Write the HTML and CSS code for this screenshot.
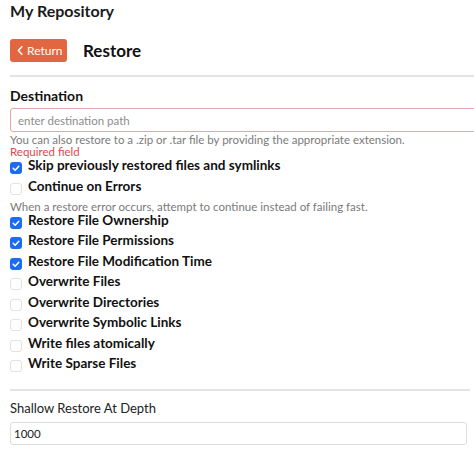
FILE: index.html
```html
<!DOCTYPE html>
<html>
<head>
<meta charset="utf-8">
<link rel="stylesheet" href="styles.css">
</head>
<body>
<div class="page">
  <h1 class="title">My Repository</h1>
  <div class="header">
    <button class="btn-return"><svg class="chev" viewBox="0 0 8 12" width="6" height="9"><path d="M6.5 1 L1.8 6 L6.5 11" fill="none" stroke="#fff" stroke-width="2" stroke-linecap="round" stroke-linejoin="round"/></svg>Return</button>
    <h2 class="subtitle">Restore</h2>
  </div>
  <div class="rule"></div>

  <div class="field">
    <div class="label">Destination</div>
    <div class="input invalid"><span class="placeholder">enter destination path</span></div>
    <div class="help">You can also restore to a .zip or .tar file by providing the appropriate extension.</div>
    <div class="error">Required field</div>
  </div>

  <div class="checks">
    <div class="check"><span class="box on"><svg viewBox="0 0 12 12"><path d="M3.2 6.3 L5.2 8.2 L8.8 4.2" fill="none" stroke="#fff" stroke-width="1.5" stroke-linecap="round" stroke-linejoin="round"/></svg></span>Skip previously restored files and symlinks</div>
    <div class="check"><span class="box"></span>Continue on Errors</div>
    <div class="help help2">When a restore error occurs, attempt to continue instead of failing fast.</div>
    <div class="check"><span class="box on"><svg viewBox="0 0 12 12"><path d="M3.2 6.3 L5.2 8.2 L8.8 4.2" fill="none" stroke="#fff" stroke-width="1.5" stroke-linecap="round" stroke-linejoin="round"/></svg></span>Restore File Ownership</div>
    <div class="check"><span class="box on"><svg viewBox="0 0 12 12"><path d="M3.2 6.3 L5.2 8.2 L8.8 4.2" fill="none" stroke="#fff" stroke-width="1.5" stroke-linecap="round" stroke-linejoin="round"/></svg></span>Restore File Permissions</div>
    <div class="check"><span class="box on"><svg viewBox="0 0 12 12"><path d="M3.2 6.3 L5.2 8.2 L8.8 4.2" fill="none" stroke="#fff" stroke-width="1.5" stroke-linecap="round" stroke-linejoin="round"/></svg></span>Restore File Modification Time</div>
    <div class="check"><span class="box"></span>Overwrite Files</div>
    <div class="check"><span class="box"></span>Overwrite Directories</div>
    <div class="check"><span class="box"></span>Overwrite Symbolic Links</div>
    <div class="check"><span class="box"></span>Write files atomically</div>
    <div class="check"><span class="box"></span>Write Sparse Files</div>
  </div>

  <div class="rule rule2"></div>

  <div class="field">
    <div class="label2">Shallow Restore At Depth</div>
    <div class="input depth"><span class="value">1000</span></div>
  </div>
</div>
</body>
</html>
```

FILE: styles.css
```css
* { box-sizing: border-box; }
html, body { margin: 0; padding: 0; background: #fff; }
body {
  font-family: "Lato", "Open Sans", "DejaVu Sans", sans-serif;
  color: #111;
  width: 474px;
  height: 452px;
  overflow: hidden;
}
.page { padding: 0 0 0 10px; }

.title {
  margin: 0;
  font-size: 16px;
  line-height: 22px;
  font-weight: 700;
  color: #1a1a1a;
}

.header {
  display: flex;
  align-items: center;
  margin-top: 17px;
  height: 23px;
}
.btn-return {
  display: flex;
  align-items: center;
  gap: 4px;
  height: 23px;
  width: 57px;
  padding: 0 0 0 7px;
  border: none;
  border-radius: 3px;
  background: #e2663f;
  color: #fff;
  font-family: inherit;
  font-size: 12px;
  line-height: 23px;
}
.chev { display: block; }
.subtitle {
  margin: 0 0 0 16px;
  font-size: 17px;
  font-weight: 700;
  line-height: 23px;
  color: #111;
}

.rule {
  height: 2px;
  background: #e4e4e4;
  margin-top: 13px;
}

.field { display: flex; flex-direction: column; }
.label {
  margin-top: 10px;
  font-size: 14px;
  font-weight: 700;
  line-height: 18px;
}
.input {
  margin-top: 3px;
  height: 24px;
  border: 1px solid #dedede;
  border-radius: 3px;
  display: flex;
  align-items: center;
}
.input.invalid {
  border-color: #eaa3a9;
  width: 480px;
  padding-left: 7px;
}
.placeholder { color: #8d8d8d; font-size: 11.5px; }

.help {
  margin-top: 1px;
  font-size: 11.5px;
  line-height: 13px;
  color: #7a7a7a;
}
.error {
  font-size: 11.5px;
  line-height: 12px;
  color: #e0474c;
}

.checks { display: flex; flex-direction: column; }
.check {
  display: flex;
  align-items: flex-start;
  gap: 6px;
  height: 20.5px;
  line-height: 14px;
  font-size: 13.5px;
  font-weight: 700;
  color: #111;
}
.box {
  width: 12px;
  height: 12px;
  flex: none;
  margin-top: 4px;
  border-radius: 3px;
  border: 1px solid #e2e2e2;
  background: #fff;
}
.box.on {
  border: none;
  background: #1b6cf2;
}
.box svg { display: block; width: 12px; height: 12px; }
.help2 { margin: 2.5px 0 0; line-height: 10px; padding-bottom: 1px; }

.rule2 { margin-top: 12.5px; margin-right: 4px; }

.label2 {
  margin-top: 8px;
  font-size: 13px;
  line-height: 18px;
  color: #222;
}
.input.depth {
  margin-top: 5px;
  width: 457px;
  height: 23px;
  padding-left: 3px;
}
.value { font-size: 11.5px; color: #222; }
```
